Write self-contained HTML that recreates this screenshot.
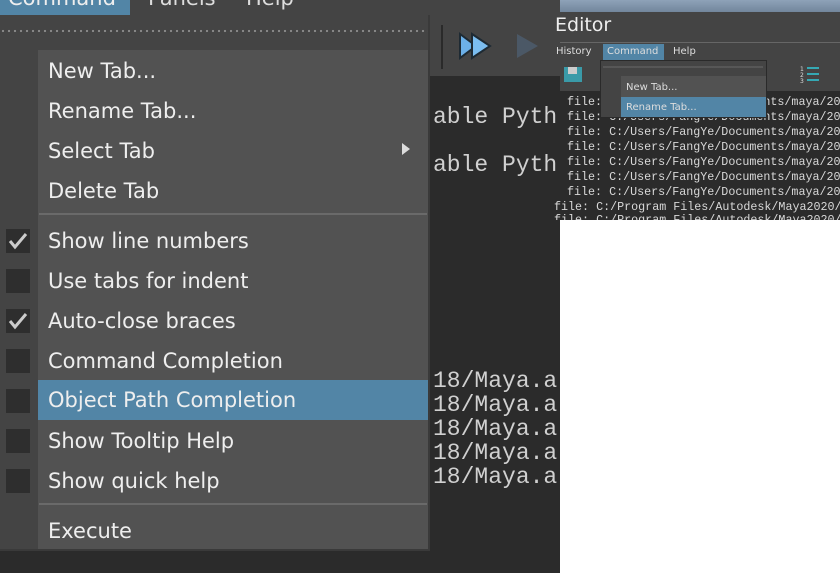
<!DOCTYPE html>
<html><head><meta charset="utf-8"><style>
*{margin:0;padding:0;box-sizing:border-box}
body{width:840px;height:573px;overflow:hidden;background:#2b2b2b;position:relative;font-family:"DejaVu Sans","Liberation Sans",sans-serif}
.abs{position:absolute}
.mono{font-family:"Liberation Mono",monospace;color:#d0d0d0;white-space:pre}
.item{position:absolute;left:38px;width:390px;height:40px;line-height:40px;padding-left:10px;font-size:21px;color:#eeeeee}
.cb{position:absolute;left:6px;width:24px;height:24px;background:#2e2e2e}
.cb svg{position:absolute;left:2px;top:3px}
.sep{position:absolute;left:39px;width:388px;height:2px;background:#6a6a6a}
.rm{font-family:"DejaVu Sans",sans-serif;font-size:10px;color:#ddd}
.ml{font-family:"Liberation Mono",monospace;font-size:11.7px;color:#d8d8d8;white-space:pre;position:absolute;left:567px}
</style></head><body>
<div class="abs" style="left:0;top:0;width:560px;height:15px;background:#444"></div>
<div class="abs" style="left:0;top:0;width:130px;height:15px;background:#5285a6"></div>
<div class="abs" style="left:8px;top:-14px;font-size:21px;color:#eee">Command</div>
<div class="abs" style="left:148px;top:-14px;font-size:21px;color:#ddd">Panels</div>
<div class="abs" style="left:246px;top:-14px;font-size:21px;color:#ddd">Help</div>
<div class="abs" style="left:0;top:15px;width:560px;height:61px;background:#444"></div>
<div class="abs" style="left:441px;top:25px;width:2px;height:44px;background:#2a2a2a"></div>
<svg class="abs" style="left:458px;top:30px" width="40" height="32"><polygon points="2,4 18,16 2,28" fill="#6cb0e8" stroke="#1e2a33" stroke-width="2"/><polygon points="14,4 32,16 14,28" fill="#7bbdf0" stroke="#1e2a33" stroke-width="2"/></svg>
<svg class="abs" style="left:514px;top:32px" width="30" height="28"><polygon points="3,2 24,14 3,26" fill="#4b5866"/></svg>
<div class="abs mono" style="left:433px;top:104px;font-size:23px">able Pyth</div>
<div class="abs mono" style="left:433px;top:152px;font-size:23px">able Pyth</div>
<div class="abs mono" style="left:433px;top:369px;font-size:23px;line-height:24px">18/Maya.a
18/Maya.a
18/Maya.a
18/Maya.a
18/Maya.a</div>

<div class="abs" style="left:0;top:15px;width:430px;height:536px;background:#444;border-right:2px solid #3a3a3a;border-bottom:2px solid #3a3a3a"></div>
<div class="abs" style="left:0;top:29px;width:428px;height:4px;background-image:radial-gradient(circle,#8a8a8a 1px,transparent 1.3px);background-size:6px 4px"></div>
<div class="abs" style="left:38px;top:50px;width:390px;height:499px;background:#525252"></div>
<div class="item" style="top:51px">New Tab...</div>
<div class="item" style="top:91px">Rename Tab...</div>
<div class="item" style="top:131px">Select Tab</div>
<svg class="abs" style="left:401px;top:142px" width="10" height="14"><polygon points="1,1 9,7 1,13" fill="#ddd"/></svg>
<div class="item" style="top:171px">Delete Tab</div>
<div class="sep" style="top:213px"></div>
<div class="item" style="top:221px">Show line numbers</div>
<div class="item" style="top:261px">Use tabs for indent</div>
<div class="item" style="top:301px">Auto-close braces</div>
<div class="item" style="top:341px">Command Completion</div>
<div class="item" style="top:380px;background:#5285a6">Object Path Completion</div>
<div class="item" style="top:421px">Show Tooltip Help</div>
<div class="item" style="top:461px">Show quick help</div>
<div class="sep" style="top:503px"></div>
<div class="item" style="top:511px">Execute</div>
<div class="cb" style="top:229px"><svg width="20" height="18"><path d="M2 9 L7 15 L18 2" stroke="#ccc" stroke-width="3" fill="none"/></svg></div>
<div class="cb" style="top:269px"></div>
<div class="cb" style="top:309px"><svg width="20" height="18"><path d="M2 9 L7 15 L18 2" stroke="#ccc" stroke-width="3" fill="none"/></svg></div>
<div class="cb" style="top:349px"></div>
<div class="cb" style="top:389px"></div>
<div class="cb" style="top:429px"></div>
<div class="cb" style="top:469px"></div>

<div class="abs" style="left:560px;top:0;width:280px;height:573px;background:#fff"></div>
<div class="abs" style="left:560px;top:0;width:280px;height:12px;background:linear-gradient(#8ea2b8,#72869c)"></div>
<div class="abs" style="left:560px;top:12px;width:280px;height:30px;background:#444"></div>
<div class="abs" style="left:555px;top:14px;font-size:19px;color:#eee">Editor</div>
<div class="abs" style="left:560px;top:42px;width:280px;height:1px;background:#666"></div>
<div class="abs" style="left:560px;top:43px;width:280px;height:48px;background:#444"></div>
<div class="abs" style="left:603px;top:44px;width:61px;height:16px;background:#5285a6"></div>
<div class="abs rm" style="left:556px;top:46px">History</div>
<div class="abs rm" style="left:607px;top:46px">Command</div>
<div class="abs rm" style="left:673px;top:46px">Help</div>
<div class="abs" style="left:564px;top:67px;width:18px;height:15px;background:#3a9aa8"></div>
<div class="abs" style="left:568px;top:67px;width:9px;height:7px;background:#ccc"></div>
<svg class="abs" style="left:800px;top:64px" width="22" height="20"><text x="0" y="7" font-size="6" fill="#ddd" font-family="DejaVu Sans">1</text><text x="0" y="13" font-size="6" fill="#ddd" font-family="DejaVu Sans">2</text><text x="0" y="19" font-size="6" fill="#ddd" font-family="DejaVu Sans">3</text><rect x="7" y="3" width="12" height="2" fill="#35a9b4"/><rect x="7" y="9" width="12" height="2" fill="#35a9b4"/><rect x="7" y="15" width="12" height="2" fill="#35a9b4"/></svg>
<div class="abs" style="left:560px;top:91px;width:280px;height:129px;background:#2b2b2b"></div>
<div class="ml" style="top:95px;line-height:15px">file: C:/Users/FangYe/Documents/maya/20
file: C:/Users/FangYe/Documents/maya/20
file: C:/Users/FangYe/Documents/maya/20
file: C:/Users/FangYe/Documents/maya/20
file: C:/Users/FangYe/Documents/maya/20
file: C:/Users/FangYe/Documents/maya/20
file: C:/Users/FangYe/Documents/maya/20</div>
<div class="ml" style="top:200px;left:554px">file: C:/Program Files/Autodesk/Maya2020/</div>
<div class="ml" style="top:213px;left:554px;height:7px;overflow:hidden">file: C:/Program Files/Autodesk/Maya2020/</div>
<div class="abs" style="left:600px;top:60px;width:167px;height:58px;background:#444;border:1px solid #2a2a2a"></div>
<div class="abs" style="left:603px;top:66px;width:160px;height:2px;background-image:radial-gradient(circle,#888 0.6px,transparent 0.8px);background-size:2px 2px"></div>
<div class="abs" style="left:621px;top:76px;width:145px;height:41px;background:#525252"></div>
<div class="abs rm" style="left:626px;top:82px">New Tab...</div>
<div class="abs" style="left:621px;top:97px;width:145px;height:20px;background:#5285a6"></div>
<div class="abs rm" style="left:626px;top:102px">Rename Tab...</div>
</body></html>
